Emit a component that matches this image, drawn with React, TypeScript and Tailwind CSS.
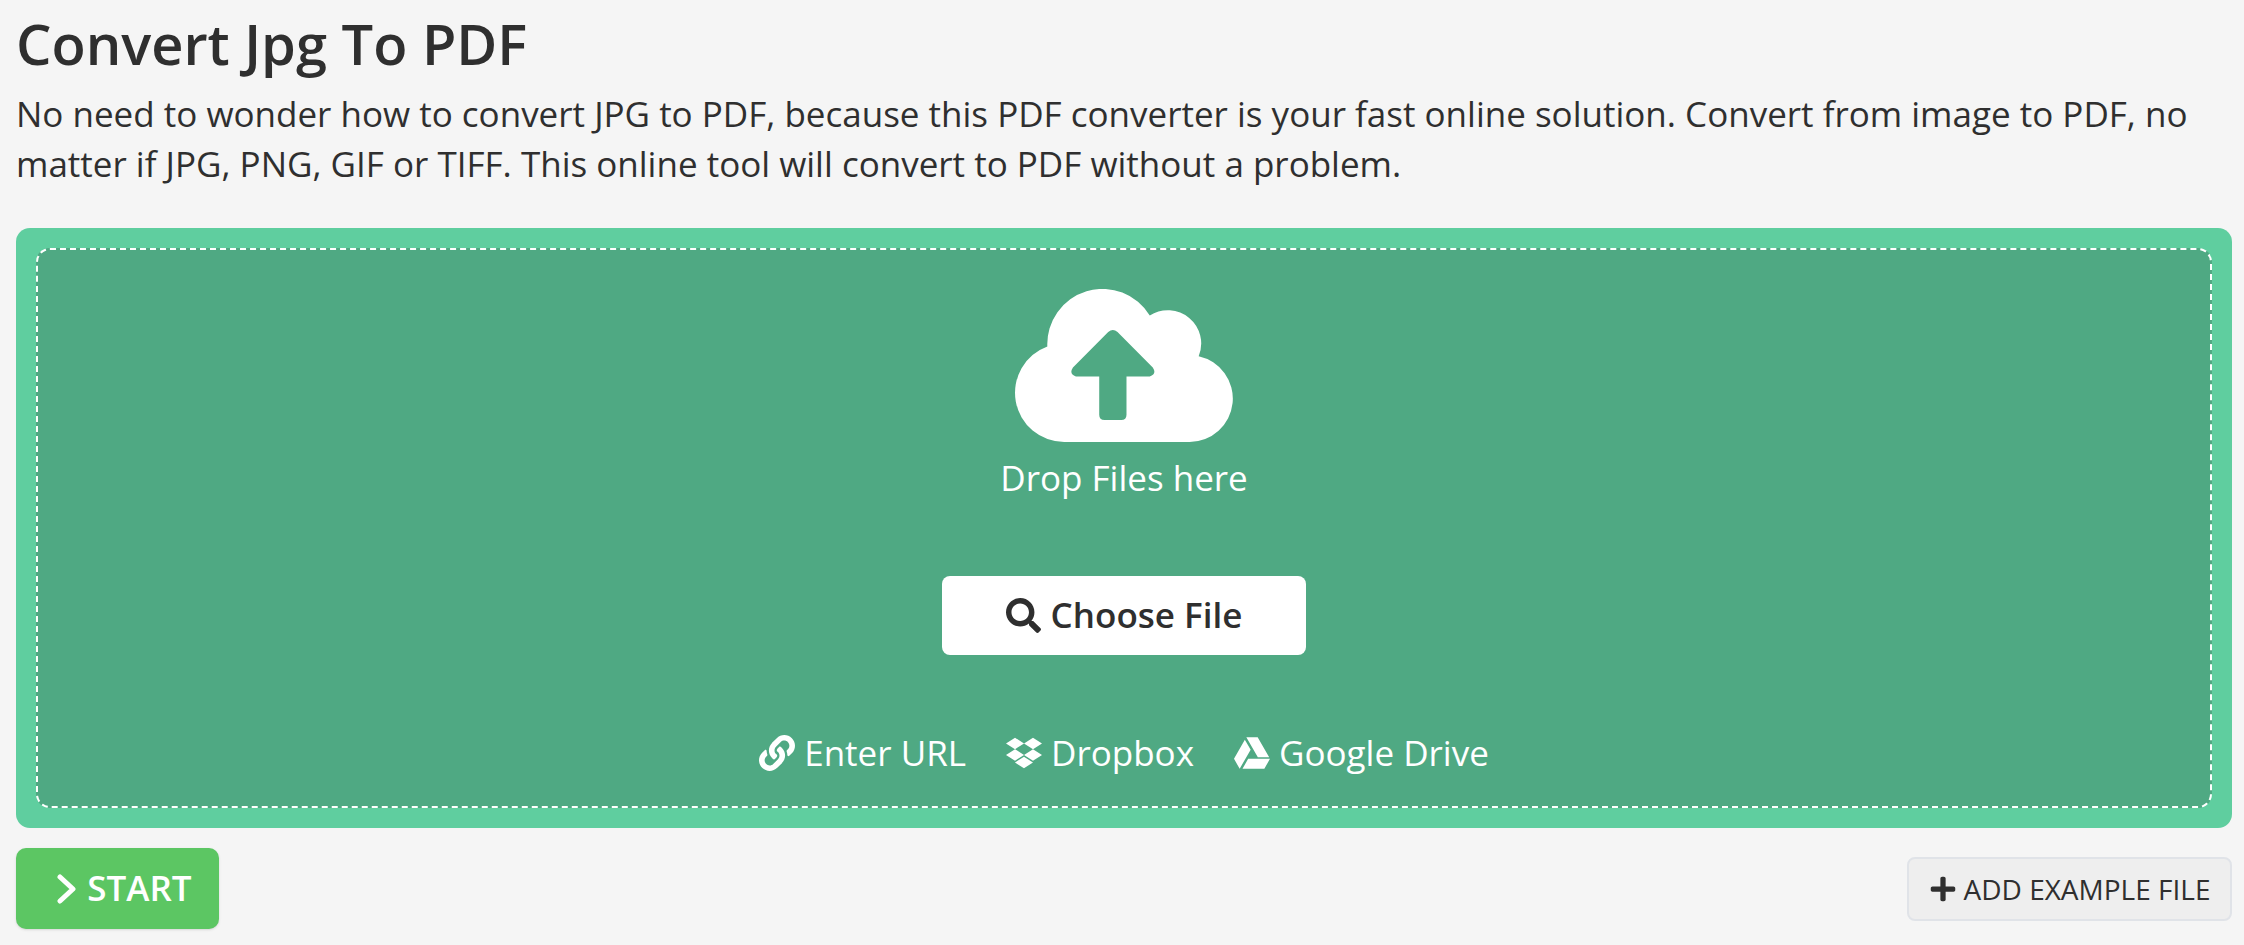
import React from 'react';
import { FaDropbox, FaGoogleDrive, FaLink, FaPlus, FaSearch } from 'react-icons/fa';

const CloudUpload = () => (
  <svg viewBox="165 60 655 460" className="w-[218px] h-[153px]" fill="#fff" aria-hidden="true">
    <path
      fillRule="evenodd"
      d="M313 520 A148 148 0 0 1 262 233 A166 166 0 0 1 570 140 A100 100 0 0 1 717 262 A130.5 130.5 0 0 1 690 520 Z M445 189 Q459 177 473 189 L579 296 Q592 316 570 323 L500 323 L500 438 Q500 454 484 454 L434 454 Q418 454 418 438 L418 323 L348 323 Q326 316 339 296 Z"
    />
  </svg>
);

const sources = [
  { icon: FaLink, label: 'Enter URL' },
  { icon: FaDropbox, label: 'Dropbox' },
  { icon: FaGoogleDrive, label: 'Google Drive' },
];

const App = () => {
  return (
    <div className="min-h-[945px] bg-[#f5f5f5] pl-4 pr-3 pt-[8px] text-[#2f2f2f] font-['Open_Sans',sans-serif] overflow-hidden">
      <h1 className="text-[56px] leading-[70px] font-semibold">Convert Jpg To PDF</h1>
      <p className="mt-[11px] text-[35px] leading-[50px]">
        No need to wonder how to convert JPG to PDF, because this PDF converter is your fast online solution. Convert from image to PDF, no matter if JPG, PNG, GIF or TIFF. This online tool will convert to PDF without a problem.
      </p>

      {/* Drop zone */}
      <div className="mt-[39px] h-[600px] rounded-[14px] bg-[#5fce9f] p-5">
        <div className="h-full rounded-[14px] border-2 border-dashed border-white bg-[#4fa983] flex flex-col items-center pt-[39px] text-white">
          <CloudUpload />
          <div className="mt-[13px] text-[35px] leading-[46px]">Drop Files here</div>
          <button className="mt-[75px] w-[364px] h-[79px] rounded-lg bg-white text-[#2f2f2f] flex items-center justify-center gap-[10px] text-[35px] font-semibold">
            <FaSearch className="w-[35px] h-[35px]" />
            Choose File
          </button>
          <div className="mt-[75px] flex items-center gap-[40px] text-[35px] leading-[46px]">
            {sources.map((source) => (
              <span key={source.label} className="flex items-center gap-[9px]">
                <source.icon className="w-[36px] h-[36px]" />
                {source.label}
              </span>
            ))}
          </div>
        </div>
      </div>

      <div className="mt-5 flex items-center justify-between">
        <button className="w-[203px] h-[81px] rounded-[10px] bg-[#5cc663] text-white shadow-sm pl-[14px] flex items-center justify-center gap-[10px] text-[35px] font-semibold">
          <svg viewBox="0 0 20 30" className="w-[20px] h-[30px]" fill="none" stroke="currentColor" strokeWidth="5" strokeLinecap="round" strokeLinejoin="round" aria-hidden="true">
            <path d="M3 3 L16 15 L3 27" />
          </svg>
          START
        </button>
        <button className="w-[325px] h-[64px] rounded-lg border-2 border-[#e0e3e8] bg-[#eeeeee] flex items-center justify-center gap-[7px] text-[28px]">
          <FaPlus className="w-[28px] h-[28px]" />
          ADD EXAMPLE FILE
        </button>
      </div>
    </div>
  );
};

export default App;
